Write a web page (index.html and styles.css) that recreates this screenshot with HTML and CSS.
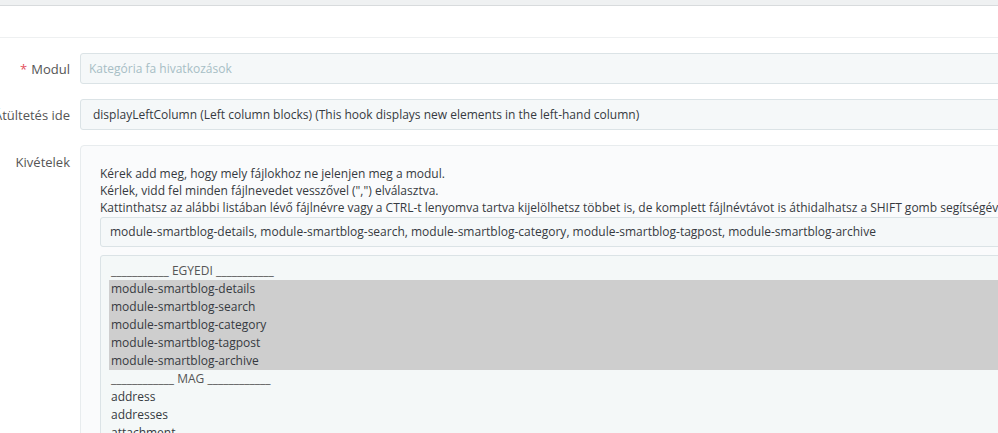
FILE: index.html
```html
<!DOCTYPE html>
<html lang="hu">
<head>
<meta charset="utf-8">
<title>Modul</title>
<link rel="stylesheet" href="styles.css">
</head>
<body>
<div class="topbar"></div>
<div class="header"></div>
<form class="form">
  <div class="row">
    <label class="label"><span class="req">*</span> Modul</label>
    <div class="field">
      <div class="input placeholder">Kategória fa hivatkozások</div>
    </div>
  </div>
  <div class="row">
    <label class="label">Átültetés ide</label>
    <div class="field">
      <div class="input select">displayLeftColumn (Left column blocks) (This hook displays new elements in the left-hand column)</div>
    </div>
  </div>
  <div class="row">
    <label class="label label-top">Kivételek</label>
    <div class="field">
      <div class="panel">
        <p class="help">Kérek add meg, hogy mely fájlokhoz ne jelenjen meg a modul.<br>Kérlek, vidd fel minden fájlnevedet vesszővel (",") elválasztva.<br>Kattinthatsz az alábbi listában lévő fájlnévre vagy a CTRL-t lenyomva tartva kijelölhetsz többet is, de komplett fájlnévtávot is áthidalhatsz a SHIFT gomb segítségével.</p>
        <div class="input text">module-smartblog-details, module-smartblog-search, module-smartblog-category, module-smartblog-tagpost, module-smartblog-archive</div>
        <div class="list">
          <div class="opt group">___________ EGYEDI ___________</div>
          <div class="opt sel">module-smartblog-details</div>
          <div class="opt sel">module-smartblog-search</div>
          <div class="opt sel">module-smartblog-category</div>
          <div class="opt sel">module-smartblog-tagpost</div>
          <div class="opt sel">module-smartblog-archive</div>
          <div class="opt group">____________ MAG ____________</div>
          <div class="opt">address</div>
          <div class="opt">addresses</div>
          <div class="opt">attachment</div>
          <div class="opt">authentication</div>
        </div>
      </div>
    </div>
  </div>
</form>
</body>
</html>
```
FILE: styles.css
```css
html, body {
  margin: 0;
  padding: 0;
  background: #fff;
  overflow: hidden;
  height: 433px;
}
body {
  font-family: "Open Sans", "Noto Sans", sans-serif;
  font-size: 12px;
  color: #363a41;
}
.topbar {
  height: 5px;
  background: #eff1f2;
  border-bottom: 1px solid #d8dbdd;
}
.header {
  height: 31px;
  border-bottom: 1px solid #eef0f1;
}
.form {
  padding-top: 15px;
  width: 1200px;
}
.row {
  display: flex;
  margin-bottom: 15px;
}
.label {
  width: 70px;
  flex: 0 0 70px;
  padding-right: 10px;
  display: flex;
  align-items: center;
  justify-content: flex-end;
  white-space: nowrap;
  font-size: 13px;
  color: #555;
}
.label-top {
  align-items: flex-start;
  padding-top: 8px;
}
.req {
  color: #e3505d;
  margin-right: 4px;
}
.field {
  flex: 1;
}
.input {
  box-sizing: border-box;
  height: 31px;
  line-height: 29px;
  border: 1px solid #dbe3e6;
  border-radius: 3px;
  background: #f5f8f9;
  padding: 0 8px;
  white-space: nowrap;
  overflow: hidden;
}
.placeholder {
  color: #a7bec5;
}
.select {
  padding-left: 12px;
}
.panel {
  border: 1px solid #e8ecee;
  border-radius: 4px;
  background: #fafbfc;
  padding: 19px 19px 0;
  height: 400px;
}
.help {
  margin: 0 0 1px;
  line-height: 17px;
  white-space: nowrap;
  color: #363a41;
}
.text {
  height: 30px;
  line-height: 28px;
  padding-left: 9px;
}
.list {
  margin-top: 8px;
  border: 1px solid #dbe3e6;
  border-radius: 3px;
  background: #f4f8f8;
  padding: 6px 8px;
}
.opt {
  height: 18px;
  line-height: 18px;
  padding-left: 2px;
  white-space: nowrap;
}
.group {
  color: #555;
}
.sel {
  background: #cecece;
}
```
